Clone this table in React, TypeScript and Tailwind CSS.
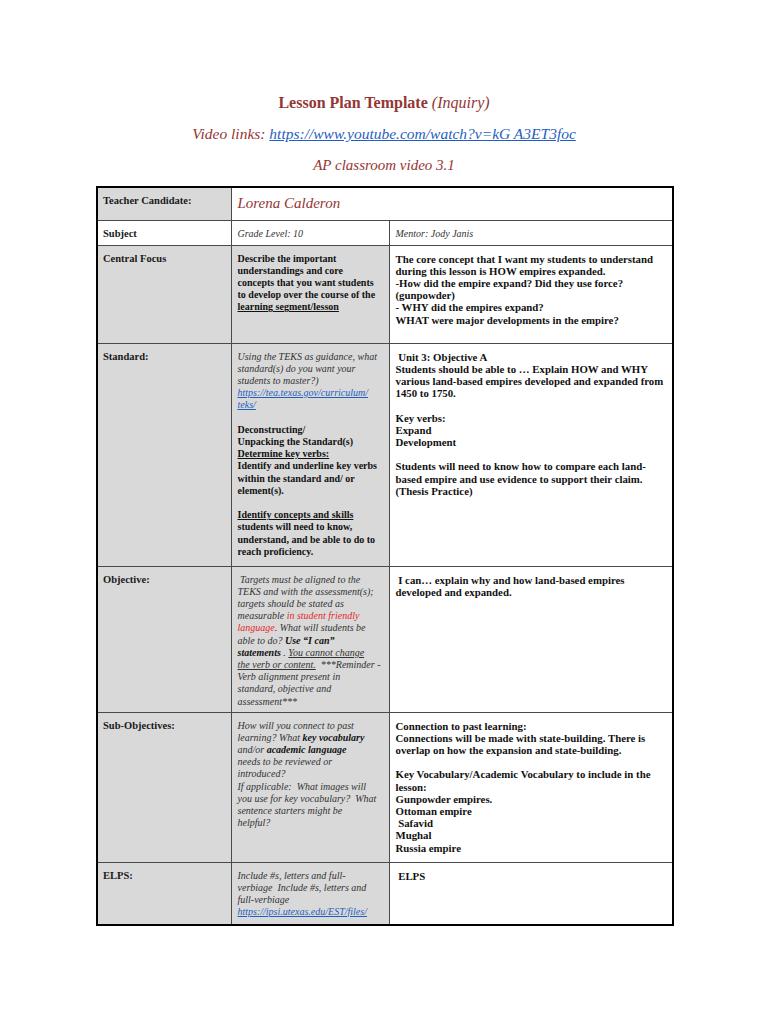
import React from "react";

const red = "text-[#943634]";

function L({ children }: { children: React.ReactNode }) {
  return <div className="whitespace-nowrap">{children}</div>;
}

export default function App() {
  const cell = "border border-[#4a4a4a] align-top pl-[6px] pr-[4px] pt-[7px] text-[10px] leading-[12.2px]";
  const c1 = "border border-[#4a4a4a] align-top pl-[5px] pr-[4px] pt-[7px] text-[10.5px] leading-[12.2px]";
  const c3 = "border border-[#4a4a4a] align-top pl-[6px] pr-[2px] pt-[7px] text-[10.8px] leading-[12.2px]";
  const gray = "bg-[#d9d9d9]";
  const lbl = "font-bold text-[#1a1a1a]";
  const ital = "italic text-[#333]";
  const bold = "font-bold text-[#111]";
  const link = "italic text-[#1f5fbf] underline";
  return (
    <div className="w-[768px] min-h-[1024px] bg-white font-['Liberation_Serif',serif]">
      <div className="pt-[93px] flex flex-col items-center">
        <div className={`text-[16px] leading-[20px] ${red}`}>
          <span className="font-bold">Lesson Plan Template</span> <span className="italic">(Inquiry)</span>
        </div>
        <div className={`mt-[11px] text-[15.5px] leading-[20px] italic ${red}`}>
          Video links: <span className="text-[#1f5fbf] underline">https://www.youtube.com/watch?v=kG A3ET3foc</span>
        </div>
        <div className={`mt-[11px] text-[15px] leading-[20px] italic ${red}`}>AP classroom video 3.1</div>
      </div>
      <div className="pl-[96px] pt-[11px]">
        <table className="table-fixed border-collapse border-2 border-black w-[576px]">
          <colgroup>
            <col className="w-[134px]" />
            <col className="w-[158px]" />
            <col className="w-[284px]" />
          </colgroup>
          <tbody>
            <tr className="h-[33px]">
              <td className={`${c1} ${gray} ${lbl}`}>Teacher Candidate:</td>
              <td colSpan={2} className={`${cell} !pt-[6px]`}>
                <span className={`italic text-[15px] leading-[18px] ${red}`}>Lorena Calderon</span>
              </td>
            </tr>
            <tr className="h-[25px]">
              <td className={`${c1} ${lbl}`}>Subject</td>
              <td className={`${cell} ${ital}`}>Grade Level: 10</td>
              <td className={`${cell} ${ital}`}>Mentor: Jody Janis</td>
            </tr>
            <tr className="h-[98px]">
              <td className={`${c1} ${gray} ${lbl}`}>Central Focus</td>
              <td className={`${cell} ${gray} ${bold}`}>
                <L>Describe the important</L>
                <L>understandings and core</L>
                <L>concepts that you want students</L>
                <L>to develop over the course of the</L>
                <L><span className="underline">learning segment/lesson</span></L>
              </td>
              <td className={`${c3} ${bold}`}>
                <L>The core concept that I want my students to understand</L>
                <L>during this lesson is HOW empires expanded.</L>
                <L>-How did the empire expand? Did they use force?</L>
                <L>(gunpowder)</L>
                <L>- WHY did the empires expand?</L>
                <L>WHAT were major developments in the empire?</L>
              </td>
            </tr>
            <tr className="h-[223px]">
              <td className={`${c1} ${gray} ${lbl}`}>Standard:</td>
              <td className={`${cell} ${gray}`}>
                <div className={ital}>
                  <L>Using the TEKS as guidance, what</L>
                  <L>standard(s) do you want your</L>
                  <L>students to master?)</L>
                </div>
                <L><span className={link}>https://tea.texas.gov/curriculum/</span></L>
                <L><span className={link}>teks/</span></L>
                <L>&nbsp;</L>
                <div className={bold}>
                  <L>Deconstructing/</L>
                  <L>Unpacking the Standard(s)</L>
                  <L><span className="underline">Determine key verbs:</span></L>
                  <L>Identify and underline key verbs</L>
                  <L>within the standard and/ or</L>
                  <L>element(s).</L>
                  <L>&nbsp;</L>
                  <L><span className="underline">Identify concepts and skills</span></L>
                  <L>students will need to know,</L>
                  <L>understand, and be able to do to</L>
                  <L>reach proficiency.</L>
                </div>
              </td>
              <td className={`${c3} ${bold}`}>
                <L>&nbsp;Unit 3: Objective A</L>
                <L>Students should be able to … Explain HOW and WHY</L>
                <L>various land-based empires developed and expanded from</L>
                <L>1450 to 1750.</L>
                <L>&nbsp;</L>
                <L>Key verbs:</L>
                <L>Expand</L>
                <L>Development</L>
                <L>&nbsp;</L>
                <L>Students will need to know how to compare each land-</L>
                <L>based empire and use evidence to support their claim.</L>
                <L>(Thesis Practice)</L>
              </td>
            </tr>
            <tr className="h-[146px]">
              <td className={`${c1} ${gray} ${lbl}`}>Objective:</td>
              <td className={`${cell} ${gray} ${ital}`}>
                <L>&nbsp;Targets must be aligned to the</L>
                <L>TEKS and with the assessment(s);</L>
                <L>targets should be stated as</L>
                <L>measurable <span className="text-[#e8282b]">in student friendly</span></L>
                <L><span className="text-[#e8282b]">language</span>. What will students be</L>
                <L>able to do? <span className="font-bold text-[#111]">Use “I can”</span></L>
                <L><span className="font-bold text-[#111]">statements</span> . <span className="underline">You cannot change</span></L>
                <L><span className="underline">the verb or content.</span>&nbsp; ***Reminder -</L>
                <L>Verb alignment present in</L>
                <L>standard, objective and</L>
                <L>assessment***</L>
              </td>
              <td className={`${c3} ${bold}`}>
                <L>&nbsp;I can… explain why and how land-based empires</L>
                <L>developed and expanded.</L>
              </td>
            </tr>
            <tr className="h-[150px]">
              <td className={`${c1} ${gray} ${lbl}`}>Sub-Objectives:</td>
              <td className={`${cell} ${gray} ${ital}`}>
                <L>How will you connect to past</L>
                <L>learning? What <span className="font-bold text-[#111]">key vocabulary</span></L>
                <L>and/or <span className="font-bold text-[#111]">academic language</span></L>
                <L>needs to be reviewed or</L>
                <L>introduced?</L>
                <L>If applicable:&nbsp; What images will</L>
                <L>you use for key vocabulary?&nbsp; What</L>
                <L>sentence starters might be</L>
                <L>helpful?</L>
              </td>
              <td className={`${c3} ${bold}`}>
                <L>Connection to past learning:</L>
                <L>Connections will be made with state-building. There is</L>
                <L>overlap on how the expansion and state-building.</L>
                <L>&nbsp;</L>
                <L>Key Vocabulary/Academic Vocabulary to include in the</L>
                <L>lesson:</L>
                <L>Gunpowder empires.</L>
                <L>Ottoman empire</L>
                <L>&nbsp;Safavid</L>
                <L>Mughal</L>
                <L>Russia empire</L>
              </td>
            </tr>
            <tr className="h-[63px]">
              <td className={`${c1} ${gray} ${lbl}`}>ELPS:</td>
              <td className={`${cell} ${gray} ${ital}`}>
                <L>Include #s, letters and full-</L>
                <L>verbiage&nbsp; Include #s, letters and</L>
                <L>full-verbiage</L>
                <L><span className="text-[#1f5fbf] underline">https://ipsi.utexas.edu/EST/files/</span></L>
              </td>
              <td className={`${c3} ${bold}`}>
                <L>&nbsp;ELPS</L>
              </td>
            </tr>
          </tbody>
        </table>
      </div>
    </div>
  );
}
